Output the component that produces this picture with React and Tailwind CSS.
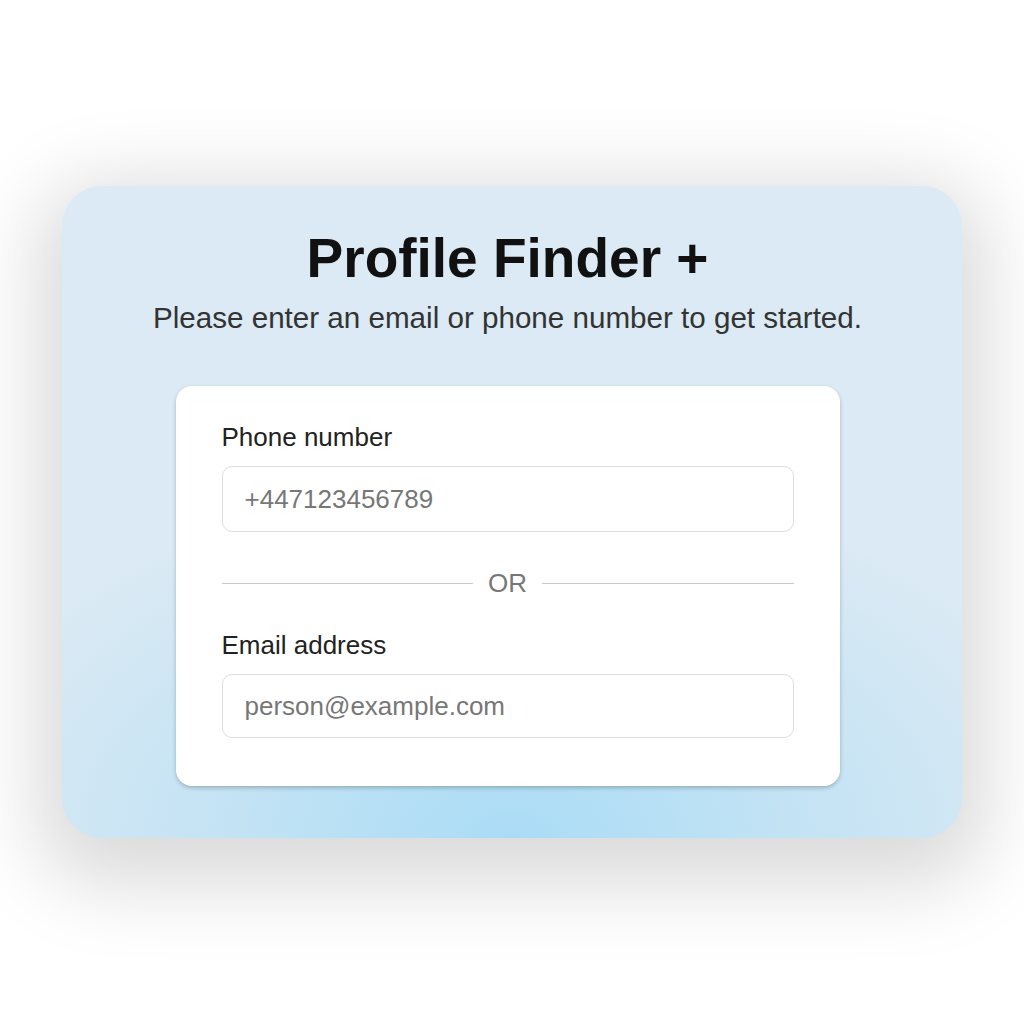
import React from 'react';

const font = { fontFamily: '"Liberation Sans", Arial, sans-serif' };

const Field = ({ label, placeholder, height }) => (
    <div className="flex flex-col">
        <label className="text-[26px] leading-[30px] text-[#222]">{label}</label>
        <input
            placeholder={placeholder}
            className={`mt-[14px] w-full ${height} rounded-[10px] border border-[#dedede] bg-white pl-[22px] text-[26px] text-[#333] placeholder:text-[#777] outline-none`}
            style={font}
        />
    </div>
);

const App = () => {
    return (
        <div className="w-full h-[1024px] bg-white flex items-center justify-center" style={font}>
            <div className="w-[900px] h-[652px] rounded-[40px] shadow-[0_22px_80px_24px_rgba(0,0,0,0.15)] bg-[#dbeaf4] bg-[radial-gradient(ellipse_65%_55%_at_50%_100%,#aadcf6_0%,#c4e3f4_50%,#dbeaf4_100%)] flex flex-col items-center pt-[39px] pr-[9px]">
                <h1 className="text-[55px] leading-[66px] font-bold text-[#111]">Profile Finder +</h1>
                <p className="mt-[10px] text-[29.6px] leading-[34px] text-[#333]">
                    Please enter an email or phone number to get started.
                </p>

                <div className="mt-[51px] w-[664px] bg-white rounded-[16px] shadow-[0_2px_4px_rgba(0,0,0,0.22)] px-[46px] pt-[36px] pb-[48px] flex flex-col">
                    <Field label="Phone number" placeholder="+447123456789" height="h-[66px]" />

                    <div className="mt-[36px] flex items-center gap-[15px] h-[30px]">
                        <div className="flex-1 h-px bg-[#c9c9c9]" />
                        <span className="text-[26px] leading-[30px] text-[#777]">OR</span>
                        <div className="flex-1 h-px bg-[#c9c9c9]" />
                    </div>

                    <div className="mt-[32px]">
                        <Field label="Email address" placeholder="person@example.com" height="h-[64px]" />
                    </div>
                </div>
            </div>
        </div>
    );
};

export default App;
